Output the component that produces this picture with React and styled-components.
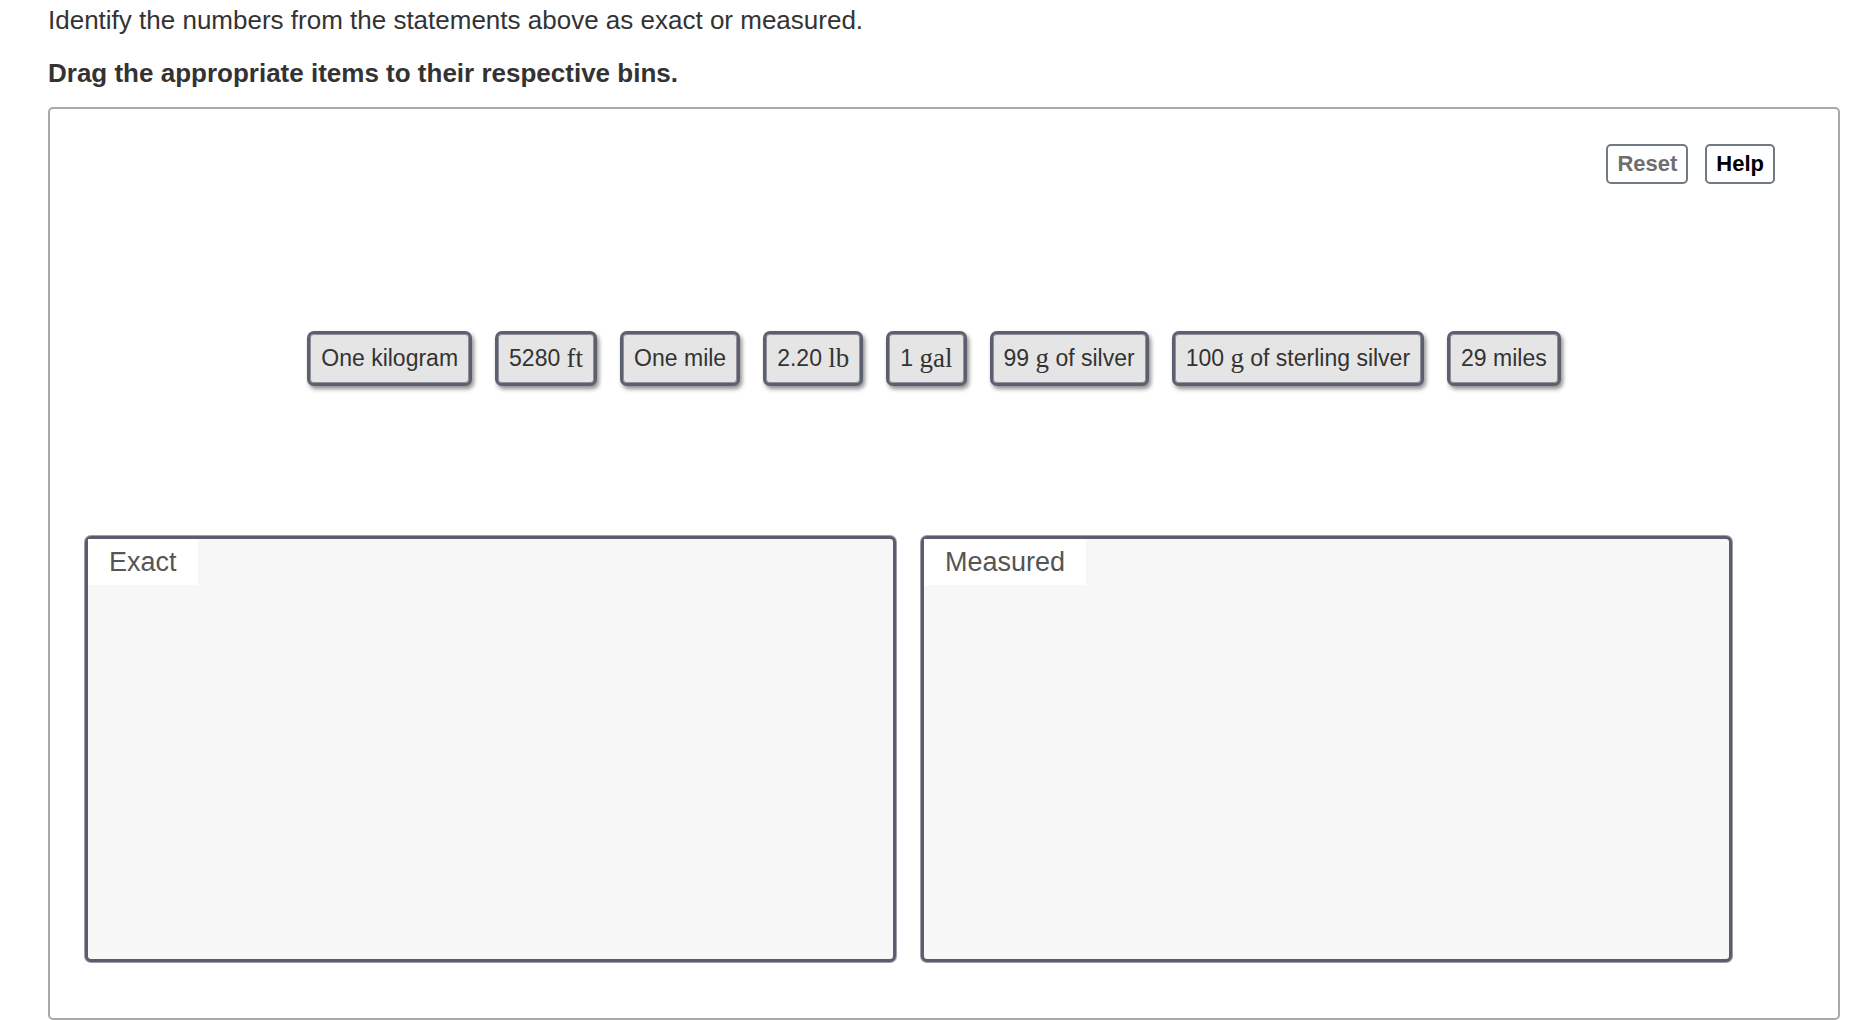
import React from "react";
import styled, { createGlobalStyle } from "styled-components";

const Global = createGlobalStyle`
  html, body { margin: 0; padding: 0; background: #ffffff; }
  body { font-family: "Liberation Sans", Arial, sans-serif; color: #333; }
`;

const Page = styled.div`
  width: 1860px;
  height: 1020px;
  box-sizing: border-box;
  padding: 5px 20px 0 48px;
  overflow: hidden;
`;

const Prompt = styled.p`
  margin: 0;
  font-size: 26px;
  line-height: 30px;
  color: #333;
  font-weight: ${(p) => (p.$bold ? 700 : 400)};
  margin-top: ${(p) => p.$gap || 0}px;
`;

const Stage = styled.div`
  margin-top: 19px;
  height: 913px;
  box-sizing: border-box;
  border: 2px solid #a9a9a9;
  border-radius: 5px;
  display: flex;
  flex-direction: column;
`;

const Toolbar = styled.div`
  display: flex;
  justify-content: flex-end;
  gap: 17px;
  margin-top: 35px;
  padding-right: 63px;
`;

const ToolButton = styled.button`
  height: 40px;
  box-sizing: border-box;
  padding: 0 9px;
  background: #fff;
  border: 2px solid #6f7a82;
  border-radius: 5px;
  font-family: "Liberation Sans", Arial, sans-serif;
  font-size: 22px;
  font-weight: 700;
  color: ${(p) => (p.$muted ? "#6e6e6e" : "#000")};
  cursor: pointer;
`;

const TileRow = styled.div`
  display: flex;
  justify-content: center;
  gap: 23px;
  margin-top: 147px;
  padding-right: 20px;
`;

const Tile = styled.div`
  height: 55px;
  box-sizing: border-box;
  padding: 0 11px;
  display: flex;
  align-items: center;
  background: #e5e5e5;
  border: 3px solid #5c5f6e;
  border-radius: 7px;
  box-shadow: inset 0 0 0 1px #8e909c, 2px 3px 4px rgba(0, 0, 0, 0.45);
  font-family: "Liberation Sans", Arial, sans-serif;
  font-size: 23px;
  color: #333;
  white-space: pre;
`;

const Unit = styled.span`
  font-family: "Liberation Serif", "Times New Roman", serif;
  font-size: 27px;
`;

const BinRow = styled.div`
  display: flex;
  gap: 25px;
  margin-top: 150px;
  padding-left: 35px;
`;

const Bin = styled.div`
  width: 811px;
  height: 426px;
  box-sizing: border-box;
  background: #f7f7f7;
  border: 3px solid #5b5d6c;
  border-radius: 6px;
  box-shadow: 0 0 0 1px #9c9eaa;
  display: flex;
  align-items: flex-start;
`;

const BinLabel = styled.div`
  background: #ffffff;
  padding: 7px 21px 7px 21px;
  font-size: 27px;
  line-height: 32px;
  color: #555;
`;

const tiles = [
  ["One kilogram"],
  ["5280 ", "ft"],
  ["One mile"],
  ["2.20 ", "lb"],
  ["1 ", "gal"],
  ["99 ", "g", " of silver"],
  ["100 ", "g", " of sterling silver"],
  ["29 miles"],
];

export default function App() {
  return (
    <>
      <Global />
      <Page>
        <Prompt>Identify the numbers from the statements above as exact or measured.</Prompt>
        <Prompt $bold $gap={23}>Drag the appropriate items to their respective bins.</Prompt>
        <Stage>
          <Toolbar>
            <ToolButton $muted>Reset</ToolButton>
            <ToolButton>Help</ToolButton>
          </Toolbar>
          <TileRow>
            {tiles.map((parts, i) => (
              <Tile key={i}>
                {parts.map((p, j) =>
                  j % 2 === 1 ? <Unit key={j}>{p}</Unit> : <span key={j}>{p}</span>
                )}
              </Tile>
            ))}
          </TileRow>
          <BinRow>
            <Bin>
              <BinLabel>Exact</BinLabel>
            </Bin>
            <Bin>
              <BinLabel>Measured</BinLabel>
            </Bin>
          </BinRow>
        </Stage>
      </Page>
    </>
  );
}
